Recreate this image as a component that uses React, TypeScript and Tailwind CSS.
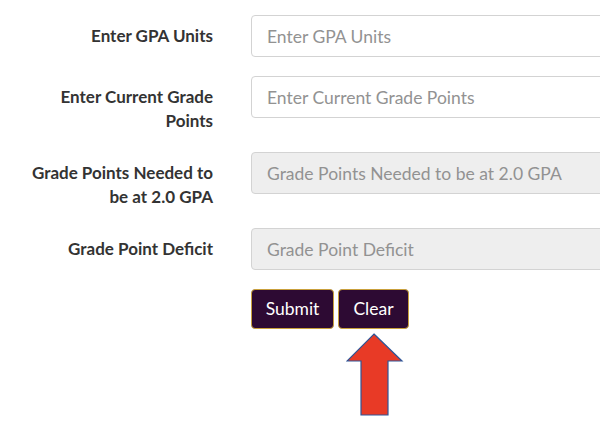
import React from "react";

const font = { fontFamily: "Lato, 'Open Sans', sans-serif" };

function Row({ label, placeholder, disabled }: { label: React.ReactNode; placeholder: string; disabled?: boolean }) {
  return (
    <div className="flex items-start">
      <label className="ml-[23px] w-[190px] shrink-0 pt-[9px] text-right text-[17px] font-bold leading-[24px] text-[#333]">
        {label}
      </label>
      <div className="ml-[38px] flex-1">
        <input
          disabled={disabled}
          placeholder={placeholder}
          className={
            "block h-[42px] w-full rounded-[4px] border border-[#d3d3d3] px-[15px] text-[17.5px] text-[#555] outline-none placeholder:text-[#929292] " +
            (disabled ? "bg-[#eeeeee]" : "bg-white")
          }
          style={font}
        />
      </div>
    </div>
  );
}

export default function App() {
  return (
    <div className="relative h-[429px] w-[600px] overflow-hidden bg-white" style={font}>
      <div className="flex w-[640px] flex-col gap-[19px] pt-[15px]">
        <Row label="Enter GPA Units" placeholder="Enter GPA Units" />
        <Row label="Enter Current Grade Points" placeholder="Enter Current Grade Points" />
        <Row label="Grade Points Needed to be at 2.0 GPA" placeholder="Grade Points Needed to be at 2.0 GPA" disabled />
        <Row label="Grade Point Deficit" placeholder="Grade Point Deficit" disabled />
        <div className="flex flex-col">
          <div className="ml-[251px] flex gap-[4px]">
            <button className="h-[40px] w-[83px] rounded-[4px] border border-[#c9a03c] bg-[#2d0a33] text-[17.5px] text-white">
              Submit
            </button>
            <button className="h-[40px] w-[71px] rounded-[4px] border border-[#c9a03c] bg-[#2d0a33] text-[17.5px] text-white">
              Clear
            </button>
          </div>
          <div className="ml-[346px] mt-[4px]">
            <svg width="58" height="84" viewBox="0 0 58 84">
              <polygon
                points="28,1 56,28 42,28 42,82 15,82 15,28 1,28"
                fill="#e83a26"
                stroke="#2f5597"
                strokeWidth="1.2"
                strokeLinejoin="miter"
              />
            </svg>
          </div>
        </div>
      </div>
    </div>
  );
}
